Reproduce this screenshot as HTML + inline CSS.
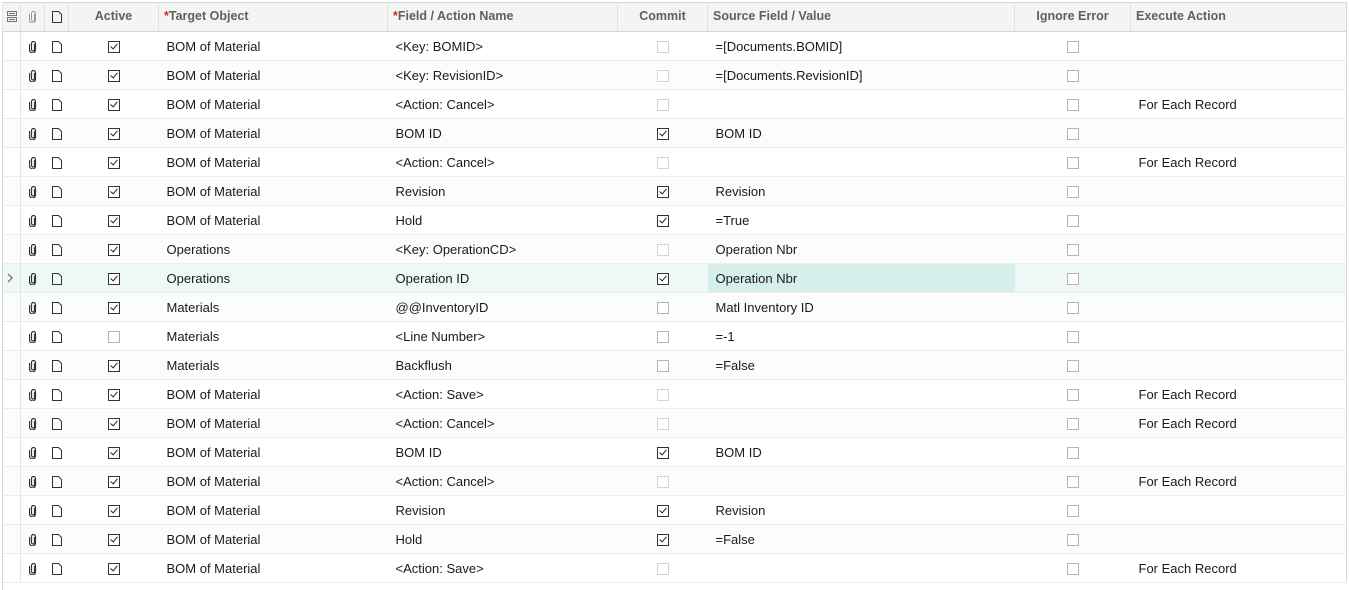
<!DOCTYPE html>
<html><head><meta charset="utf-8"><style>
*{box-sizing:border-box;margin:0;padding:0}
body{width:1349px;height:590px;background:#fff;font-family:"Liberation Sans",Arial,sans-serif;font-size:13px;color:#1a1a1a;overflow:hidden;position:relative}
.lb{position:absolute;left:2px;top:2px;width:1px;height:588px;background:#d6d6d6}
table{position:absolute;left:2px;top:2px;width:1344px;border-collapse:collapse;table-layout:fixed;border-right:1px solid #d6d6d6;border-top:1px solid #d6d6d6;border-bottom:1px solid #d6d6d6}
th{height:29px;padding-bottom:2px;background:#f3f4f4;color:#5f5f5f;font-weight:bold;font-size:12.5px;text-align:left;padding-left:5px;border-left:1px solid #e2e2e2;border-bottom:1px solid #d6d6d6;white-space:nowrap}
th.c{text-align:center;padding:0 0 2px 0}
td{height:29px;padding-left:8px;border-bottom:1px solid #ececec;white-space:nowrap}
td.c{text-align:center;padding:0}
td.f{border-right:1px solid #e4e4e4;padding:0}
tr:nth-child(even) td{background:#fbfcfc}
tr.sel td{background:#eef8f6}
tr.sel td.hl{background:#d6efea}
.s{color:#d9251d}
.cb{display:inline-block;width:12px;height:12px;border:1px solid #b4b4b4;background:#fff;vertical-align:middle;position:relative}
.cb.d{border-color:#d4d4d4}
.cb.k{border-color:#333}
.cb.k:after{content:"";position:absolute;left:3px;top:0px;width:3px;height:6px;border:solid #222;border-width:0 1.5px 1.5px 0;transform:rotate(40deg)}
svg{vertical-align:middle}
</style></head><body>
<div class="lb"></div>
<table>
<colgroup><col style="width:18px"><col style="width:24px"><col style="width:24px"><col style="width:90px"><col style="width:229px"><col style="width:230px"><col style="width:90px"><col style="width:307px"><col style="width:116px"><col style="width:216px"></colgroup>
<thead><tr>
<th class="c"><svg width="10" height="11" viewBox="0 0 10 11"><rect x="0.5" y="0.5" width="9" height="4" fill="none" stroke="#777"/><rect x="0.5" y="6.5" width="9" height="4" fill="none" stroke="#777"/><line x1="2" y1="2.5" x2="8" y2="2.5" stroke="#777"/><line x1="2" y1="8.5" x2="8" y2="8.5" stroke="#777"/></svg></th>
<th class="c"><svg width="8" height="12" viewBox="0 0 8 12"><path d="M5.5 3v5.5a1.5 1.5 0 0 1-3 0V2.5a2 2 0 0 1 4 0V9a3 3 0 0 1-6 0V3" fill="none" stroke="#999" stroke-width="1"/></svg></th>
<th class="c"><svg width="10" height="12" viewBox="0 0 10 12"><path d="M0.5 0.5h6l3 3v8h-9z" fill="none" stroke="#333"/></svg></th>
<th class="c">Active</th><th><span class="s">*</span>Target Object</th><th><span class="s">*</span>Field / Action Name</th><th class="c">Commit</th><th>Source Field / Value</th><th class="c">Ignore Error</th><th>Execute Action</th>
</tr></thead>
<tbody>
<tr><td class="f"></td><td class="c"><svg width="8" height="12" viewBox="0 0 8 12"><path d="M5.5 3v5.5a1.5 1.5 0 0 1-3 0V2.5a2 2 0 0 1 4 0V9a3 3 0 0 1-6 0V3" fill="none" stroke="#333" stroke-width="1.2"/></svg></td><td class="c"><svg width="10" height="12" viewBox="0 0 10 12"><path d="M0.5 0.5h6l3 3v8h-9z" fill="none" stroke="#333"/></svg></td><td class="c"><span class="cb k"></span></td><td>BOM of Material</td><td>&lt;Key: BOMID&gt;</td><td class="c"><span class="cb d"></span></td><td>=[Documents.BOMID]</td><td class="c"><span class="cb"></span></td><td></td></tr>
<tr><td class="f"></td><td class="c"><svg width="8" height="12" viewBox="0 0 8 12"><path d="M5.5 3v5.5a1.5 1.5 0 0 1-3 0V2.5a2 2 0 0 1 4 0V9a3 3 0 0 1-6 0V3" fill="none" stroke="#333" stroke-width="1.2"/></svg></td><td class="c"><svg width="10" height="12" viewBox="0 0 10 12"><path d="M0.5 0.5h6l3 3v8h-9z" fill="none" stroke="#333"/></svg></td><td class="c"><span class="cb k"></span></td><td>BOM of Material</td><td>&lt;Key: RevisionID&gt;</td><td class="c"><span class="cb d"></span></td><td>=[Documents.RevisionID]</td><td class="c"><span class="cb"></span></td><td></td></tr>
<tr><td class="f"></td><td class="c"><svg width="8" height="12" viewBox="0 0 8 12"><path d="M5.5 3v5.5a1.5 1.5 0 0 1-3 0V2.5a2 2 0 0 1 4 0V9a3 3 0 0 1-6 0V3" fill="none" stroke="#333" stroke-width="1.2"/></svg></td><td class="c"><svg width="10" height="12" viewBox="0 0 10 12"><path d="M0.5 0.5h6l3 3v8h-9z" fill="none" stroke="#333"/></svg></td><td class="c"><span class="cb k"></span></td><td>BOM of Material</td><td>&lt;Action: Cancel&gt;</td><td class="c"><span class="cb d"></span></td><td></td><td class="c"><span class="cb"></span></td><td>For Each Record</td></tr>
<tr><td class="f"></td><td class="c"><svg width="8" height="12" viewBox="0 0 8 12"><path d="M5.5 3v5.5a1.5 1.5 0 0 1-3 0V2.5a2 2 0 0 1 4 0V9a3 3 0 0 1-6 0V3" fill="none" stroke="#333" stroke-width="1.2"/></svg></td><td class="c"><svg width="10" height="12" viewBox="0 0 10 12"><path d="M0.5 0.5h6l3 3v8h-9z" fill="none" stroke="#333"/></svg></td><td class="c"><span class="cb k"></span></td><td>BOM of Material</td><td>BOM ID</td><td class="c"><span class="cb k"></span></td><td>BOM ID</td><td class="c"><span class="cb"></span></td><td></td></tr>
<tr><td class="f"></td><td class="c"><svg width="8" height="12" viewBox="0 0 8 12"><path d="M5.5 3v5.5a1.5 1.5 0 0 1-3 0V2.5a2 2 0 0 1 4 0V9a3 3 0 0 1-6 0V3" fill="none" stroke="#333" stroke-width="1.2"/></svg></td><td class="c"><svg width="10" height="12" viewBox="0 0 10 12"><path d="M0.5 0.5h6l3 3v8h-9z" fill="none" stroke="#333"/></svg></td><td class="c"><span class="cb k"></span></td><td>BOM of Material</td><td>&lt;Action: Cancel&gt;</td><td class="c"><span class="cb d"></span></td><td></td><td class="c"><span class="cb"></span></td><td>For Each Record</td></tr>
<tr><td class="f"></td><td class="c"><svg width="8" height="12" viewBox="0 0 8 12"><path d="M5.5 3v5.5a1.5 1.5 0 0 1-3 0V2.5a2 2 0 0 1 4 0V9a3 3 0 0 1-6 0V3" fill="none" stroke="#333" stroke-width="1.2"/></svg></td><td class="c"><svg width="10" height="12" viewBox="0 0 10 12"><path d="M0.5 0.5h6l3 3v8h-9z" fill="none" stroke="#333"/></svg></td><td class="c"><span class="cb k"></span></td><td>BOM of Material</td><td>Revision</td><td class="c"><span class="cb k"></span></td><td>Revision</td><td class="c"><span class="cb"></span></td><td></td></tr>
<tr><td class="f"></td><td class="c"><svg width="8" height="12" viewBox="0 0 8 12"><path d="M5.5 3v5.5a1.5 1.5 0 0 1-3 0V2.5a2 2 0 0 1 4 0V9a3 3 0 0 1-6 0V3" fill="none" stroke="#333" stroke-width="1.2"/></svg></td><td class="c"><svg width="10" height="12" viewBox="0 0 10 12"><path d="M0.5 0.5h6l3 3v8h-9z" fill="none" stroke="#333"/></svg></td><td class="c"><span class="cb k"></span></td><td>BOM of Material</td><td>Hold</td><td class="c"><span class="cb k"></span></td><td>=True</td><td class="c"><span class="cb"></span></td><td></td></tr>
<tr><td class="f"></td><td class="c"><svg width="8" height="12" viewBox="0 0 8 12"><path d="M5.5 3v5.5a1.5 1.5 0 0 1-3 0V2.5a2 2 0 0 1 4 0V9a3 3 0 0 1-6 0V3" fill="none" stroke="#333" stroke-width="1.2"/></svg></td><td class="c"><svg width="10" height="12" viewBox="0 0 10 12"><path d="M0.5 0.5h6l3 3v8h-9z" fill="none" stroke="#333"/></svg></td><td class="c"><span class="cb k"></span></td><td>Operations</td><td>&lt;Key: OperationCD&gt;</td><td class="c"><span class="cb d"></span></td><td>Operation Nbr</td><td class="c"><span class="cb"></span></td><td></td></tr>
<tr class="sel"><td class="f"></td><td class="c"><svg width="8" height="12" viewBox="0 0 8 12"><path d="M5.5 3v5.5a1.5 1.5 0 0 1-3 0V2.5a2 2 0 0 1 4 0V9a3 3 0 0 1-6 0V3" fill="none" stroke="#333" stroke-width="1.2"/></svg></td><td class="c"><svg width="10" height="12" viewBox="0 0 10 12"><path d="M0.5 0.5h6l3 3v8h-9z" fill="none" stroke="#333"/></svg></td><td class="c"><span class="cb k"></span></td><td>Operations</td><td>Operation ID</td><td class="c"><span class="cb k"></span></td><td class="hl">Operation Nbr</td><td class="c"><span class="cb"></span></td><td></td></tr>
<tr><td class="f"></td><td class="c"><svg width="8" height="12" viewBox="0 0 8 12"><path d="M5.5 3v5.5a1.5 1.5 0 0 1-3 0V2.5a2 2 0 0 1 4 0V9a3 3 0 0 1-6 0V3" fill="none" stroke="#333" stroke-width="1.2"/></svg></td><td class="c"><svg width="10" height="12" viewBox="0 0 10 12"><path d="M0.5 0.5h6l3 3v8h-9z" fill="none" stroke="#333"/></svg></td><td class="c"><span class="cb k"></span></td><td>Materials</td><td>@@InventoryID</td><td class="c"><span class="cb"></span></td><td>Matl Inventory ID</td><td class="c"><span class="cb"></span></td><td></td></tr>
<tr><td class="f"></td><td class="c"><svg width="8" height="12" viewBox="0 0 8 12"><path d="M5.5 3v5.5a1.5 1.5 0 0 1-3 0V2.5a2 2 0 0 1 4 0V9a3 3 0 0 1-6 0V3" fill="none" stroke="#333" stroke-width="1.2"/></svg></td><td class="c"><svg width="10" height="12" viewBox="0 0 10 12"><path d="M0.5 0.5h6l3 3v8h-9z" fill="none" stroke="#333"/></svg></td><td class="c"><span class="cb"></span></td><td>Materials</td><td>&lt;Line Number&gt;</td><td class="c"><span class="cb"></span></td><td>=-1</td><td class="c"><span class="cb"></span></td><td></td></tr>
<tr><td class="f"></td><td class="c"><svg width="8" height="12" viewBox="0 0 8 12"><path d="M5.5 3v5.5a1.5 1.5 0 0 1-3 0V2.5a2 2 0 0 1 4 0V9a3 3 0 0 1-6 0V3" fill="none" stroke="#333" stroke-width="1.2"/></svg></td><td class="c"><svg width="10" height="12" viewBox="0 0 10 12"><path d="M0.5 0.5h6l3 3v8h-9z" fill="none" stroke="#333"/></svg></td><td class="c"><span class="cb k"></span></td><td>Materials</td><td>Backflush</td><td class="c"><span class="cb"></span></td><td>=False</td><td class="c"><span class="cb"></span></td><td></td></tr>
<tr><td class="f"></td><td class="c"><svg width="8" height="12" viewBox="0 0 8 12"><path d="M5.5 3v5.5a1.5 1.5 0 0 1-3 0V2.5a2 2 0 0 1 4 0V9a3 3 0 0 1-6 0V3" fill="none" stroke="#333" stroke-width="1.2"/></svg></td><td class="c"><svg width="10" height="12" viewBox="0 0 10 12"><path d="M0.5 0.5h6l3 3v8h-9z" fill="none" stroke="#333"/></svg></td><td class="c"><span class="cb k"></span></td><td>BOM of Material</td><td>&lt;Action: Save&gt;</td><td class="c"><span class="cb d"></span></td><td></td><td class="c"><span class="cb"></span></td><td>For Each Record</td></tr>
<tr><td class="f"></td><td class="c"><svg width="8" height="12" viewBox="0 0 8 12"><path d="M5.5 3v5.5a1.5 1.5 0 0 1-3 0V2.5a2 2 0 0 1 4 0V9a3 3 0 0 1-6 0V3" fill="none" stroke="#333" stroke-width="1.2"/></svg></td><td class="c"><svg width="10" height="12" viewBox="0 0 10 12"><path d="M0.5 0.5h6l3 3v8h-9z" fill="none" stroke="#333"/></svg></td><td class="c"><span class="cb k"></span></td><td>BOM of Material</td><td>&lt;Action: Cancel&gt;</td><td class="c"><span class="cb d"></span></td><td></td><td class="c"><span class="cb"></span></td><td>For Each Record</td></tr>
<tr><td class="f"></td><td class="c"><svg width="8" height="12" viewBox="0 0 8 12"><path d="M5.5 3v5.5a1.5 1.5 0 0 1-3 0V2.5a2 2 0 0 1 4 0V9a3 3 0 0 1-6 0V3" fill="none" stroke="#333" stroke-width="1.2"/></svg></td><td class="c"><svg width="10" height="12" viewBox="0 0 10 12"><path d="M0.5 0.5h6l3 3v8h-9z" fill="none" stroke="#333"/></svg></td><td class="c"><span class="cb k"></span></td><td>BOM of Material</td><td>BOM ID</td><td class="c"><span class="cb k"></span></td><td>BOM ID</td><td class="c"><span class="cb"></span></td><td></td></tr>
<tr><td class="f"></td><td class="c"><svg width="8" height="12" viewBox="0 0 8 12"><path d="M5.5 3v5.5a1.5 1.5 0 0 1-3 0V2.5a2 2 0 0 1 4 0V9a3 3 0 0 1-6 0V3" fill="none" stroke="#333" stroke-width="1.2"/></svg></td><td class="c"><svg width="10" height="12" viewBox="0 0 10 12"><path d="M0.5 0.5h6l3 3v8h-9z" fill="none" stroke="#333"/></svg></td><td class="c"><span class="cb k"></span></td><td>BOM of Material</td><td>&lt;Action: Cancel&gt;</td><td class="c"><span class="cb d"></span></td><td></td><td class="c"><span class="cb"></span></td><td>For Each Record</td></tr>
<tr><td class="f"></td><td class="c"><svg width="8" height="12" viewBox="0 0 8 12"><path d="M5.5 3v5.5a1.5 1.5 0 0 1-3 0V2.5a2 2 0 0 1 4 0V9a3 3 0 0 1-6 0V3" fill="none" stroke="#333" stroke-width="1.2"/></svg></td><td class="c"><svg width="10" height="12" viewBox="0 0 10 12"><path d="M0.5 0.5h6l3 3v8h-9z" fill="none" stroke="#333"/></svg></td><td class="c"><span class="cb k"></span></td><td>BOM of Material</td><td>Revision</td><td class="c"><span class="cb k"></span></td><td>Revision</td><td class="c"><span class="cb"></span></td><td></td></tr>
<tr><td class="f"></td><td class="c"><svg width="8" height="12" viewBox="0 0 8 12"><path d="M5.5 3v5.5a1.5 1.5 0 0 1-3 0V2.5a2 2 0 0 1 4 0V9a3 3 0 0 1-6 0V3" fill="none" stroke="#333" stroke-width="1.2"/></svg></td><td class="c"><svg width="10" height="12" viewBox="0 0 10 12"><path d="M0.5 0.5h6l3 3v8h-9z" fill="none" stroke="#333"/></svg></td><td class="c"><span class="cb k"></span></td><td>BOM of Material</td><td>Hold</td><td class="c"><span class="cb k"></span></td><td>=False</td><td class="c"><span class="cb"></span></td><td></td></tr>
<tr><td class="f"></td><td class="c"><svg width="8" height="12" viewBox="0 0 8 12"><path d="M5.5 3v5.5a1.5 1.5 0 0 1-3 0V2.5a2 2 0 0 1 4 0V9a3 3 0 0 1-6 0V3" fill="none" stroke="#333" stroke-width="1.2"/></svg></td><td class="c"><svg width="10" height="12" viewBox="0 0 10 12"><path d="M0.5 0.5h6l3 3v8h-9z" fill="none" stroke="#333"/></svg></td><td class="c"><span class="cb k"></span></td><td>BOM of Material</td><td>&lt;Action: Save&gt;</td><td class="c"><span class="cb d"></span></td><td></td><td class="c"><span class="cb"></span></td><td>For Each Record</td></tr>
</tbody></table>
<svg style="position:absolute;left:7px;top:273px" width="6" height="10" viewBox="0 0 6 10"><path d="M1 1l4 4-4 4" fill="none" stroke="#666" stroke-width="1.2"/></svg>
</body></html>
